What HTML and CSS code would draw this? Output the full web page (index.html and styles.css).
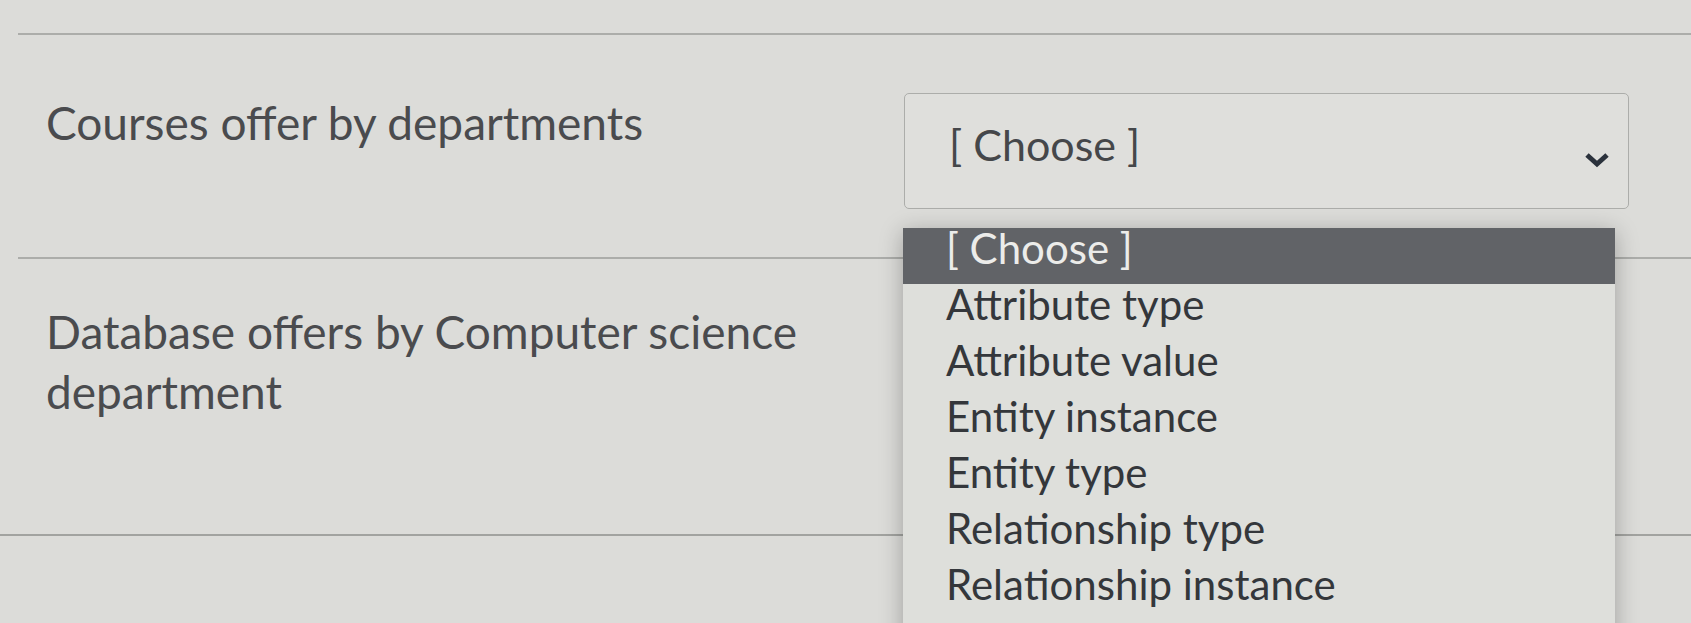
FILE: index.html
```html
<!DOCTYPE html>
<html lang="en">
<head>
    <meta charset="UTF-8">
    <meta name="viewport" content="width=device-width, initial-scale=1.0">
    <title>Quiz - Matching</title>
    <link rel="stylesheet" href="styles.css">
</head>
<body>
    <div class="quiz">
        <div class="match-row first-row">
            <div class="match-label">Courses offer by departments</div>
            <div class="match-field">
                <div class="select open">
                    <span class="select-value">[ Choose ]</span>
                    <svg class="chevron" width="26" height="16" viewBox="0 0 26 16" aria-hidden="true">
                        <polyline points="3,3 13,12 23,3" fill="none" stroke="#2b323c" stroke-width="5" stroke-linejoin="miter"/>
                    </svg>
                </div>
                <ul class="dropdown">
                    <li class="selected">[ Choose ]</li>
                    <li>Attribute type</li>
                    <li>Attribute value</li>
                    <li>Entity instance</li>
                    <li>Entity type</li>
                    <li>Relationship type</li>
                    <li>Relationship instance</li>
                </ul>
            </div>
        </div>
        <div class="match-row second-row">
            <div class="match-label">Database offers by Computer science department</div>
            <div class="match-field">
                <div class="select">
                    <span class="select-value">[ Choose ]</span>
                </div>
            </div>
        </div>
        <div class="quiz-end"></div>
    </div>
</body>
</html>
```

FILE: styles.css
```css
/* Global Styles */
body {
    margin: 0;
    padding: 0;
    background: #dcdcd9;
    font-family: 'Lato', 'Open Sans', sans-serif;
    color: #4a4b4e;
    overflow: hidden;
    height: 623px;
}

.quiz {
    padding-top: 33px;
    padding-left: 18px;
}

.match-row {
    display: grid;
    grid-template-columns: 886px 1fr;
    border-top: 2px solid #acadaa;
}

.first-row {
    padding: 58px 0 48px;
}

.second-row {
    padding: 43px 0 112px;
}

.match-label {
    padding: 0 40px 0 28px;
    font-size: 46px;
    line-height: 60px;
}

.match-field {
    position: relative;
    padding-right: 62px;
}

.select {
    display: flex;
    justify-content: space-between;
    align-items: flex-start;
    height: 116px;
    box-sizing: border-box;
    padding: 25px 18px 0 44px;
    border: 1.5px solid #acadaa;
    border-radius: 5px;
    background: #dfdfdc;
    font-size: 43px;
    line-height: 52px;
    color: #45474a;
}

.second-row .select {
    visibility: hidden;
}

.chevron {
    margin-top: 33px;
}

/* Open option list */
.dropdown {
    position: absolute;
    top: 135px;
    left: -1px;
    width: 712px;
    margin: 0;
    padding: 0 0 30px;
    list-style: none;
    background: #dedfdb;
    box-shadow: 0 4px 22px rgba(0, 0, 0, 0.28);
    z-index: 2;
}

.dropdown li {
    height: 56px;
    box-sizing: border-box;
    padding: 0 0 16px 43px;
    font-size: 42px;
    line-height: 40px;
    color: #34373b;
}

.dropdown li.selected {
    background: #616367;
    color: #ececea;
}

.quiz-end {
    margin-left: -18px;
    border-top: 2px solid #a2a3a0;
}
```
